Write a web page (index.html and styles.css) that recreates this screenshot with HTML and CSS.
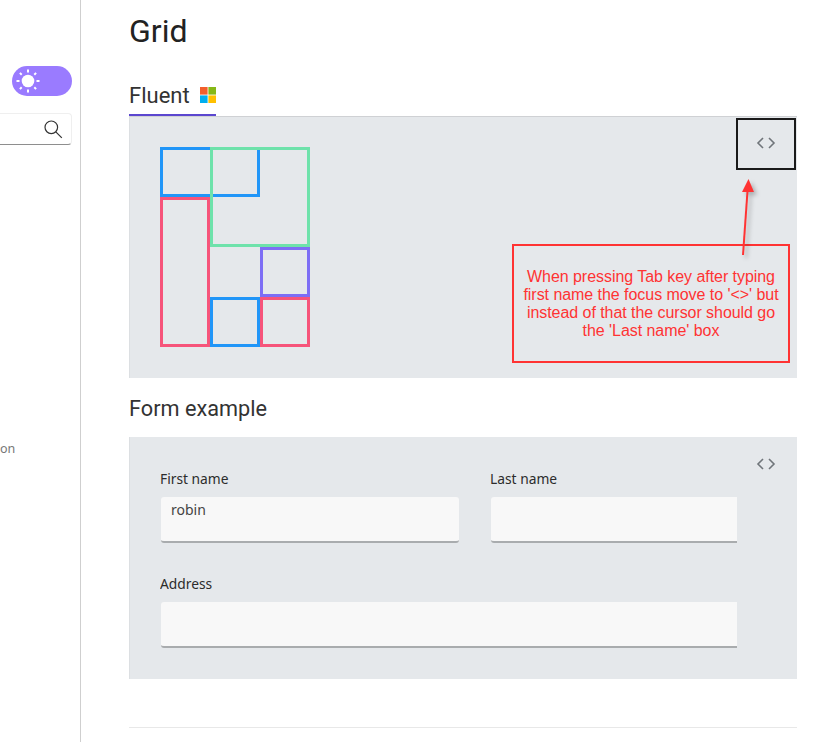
FILE: index.html
```html
<!DOCTYPE html>
<html lang="en">
<head>
<meta charset="utf-8">
<title>Grid</title>
<link rel="stylesheet" href="styles.css">
</head>
<body>
<div class="page">
  <aside class="sidebar">
    <div class="toggle">
      <svg class="sun" width="24" height="24" viewBox="0 0 24 24" aria-hidden="true">
        <circle cx="12" cy="12" r="6.3" fill="#fff"/>
        <g stroke="#fff" stroke-width="2" fill="none">
          <path d="M12 0.5v3M12 20.5v3M0.5 12h3M20.5 12h3"/>
          <path d="M3.9 3.9l1.8 1.8M18.3 18.3l1.8 1.8M3.9 20.1l1.8-1.8M18.3 5.7l1.8-1.8"/>
        </g>
      </svg>
    </div>
    <div class="search">
      <svg width="20" height="20" viewBox="0 0 20 20" aria-hidden="true">
        <circle cx="8.3" cy="8.3" r="6.3" fill="none" stroke="#333" stroke-width="1.2"/>
        <path d="M12.8 12.8l6 6" stroke="#333" stroke-width="1.2" fill="none"/>
      </svg>
    </div>
    <div class="nav-frag">on</div>
  </aside>
  <main class="main">
    <h1 class="title">Grid</h1>
    <div class="tabs">
      <div class="tab">
        <span>Fluent</span>
        <svg width="16" height="16" viewBox="0 0 16 16" aria-hidden="true">
          <rect width="7.6" height="7.6" fill="#f25f2c"/>
          <rect x="8.4" width="7.6" height="7.6" fill="#86b817"/>
          <rect y="8.4" width="7.6" height="7.6" fill="#00aeef"/>
          <rect x="8.4" y="8.4" width="7.6" height="7.6" fill="#ffc000"/>
        </svg>
      </div>
    </div>
    <section class="panel panel-grid">
      <div class="tiles">
        <div class="tile t-blue-a"></div>
        <div class="tile t-green"></div>
        <div class="tile t-pink-a"></div>
        <div class="tile t-purple"></div>
        <div class="tile t-blue-b"></div>
        <div class="tile t-pink-b"></div>
      </div>
      <button class="code focused" type="button" aria-label="Show code">
        <svg width="20" height="12" viewBox="0 0 20 12" aria-hidden="true"><path d="M7 1L2 6l5 5M13 1l5 5-5 5" fill="none" stroke="#70757a" stroke-width="1.6"/></svg>
      </button>
      <div class="note">When pressing Tab key after typing first name the focus move to '&lt;&gt;' but instead of that the cursor should go the 'Last name' box</div>
      <svg class="arrow" width="24" height="80" viewBox="0 0 24 80" aria-hidden="true">
        <path d="M6 76L10.5 12" stroke="#ff3333" stroke-width="2" fill="none"/>
        <path d="M11.5 0L5 13h12z" fill="#ff3333"/>
      </svg>
    </section>
    <h2 class="subtitle">Form example</h2>
    <section class="panel panel-form">
      <form class="form">
        <div class="field">
          <label class="label" for="first">First name</label>
          <div class="input" id="first">robin</div>
        </div>
        <div class="field">
          <label class="label" for="last">Last name</label>
          <div class="input" id="last"></div>
        </div>
        <div class="field field-wide">
          <label class="label" for="address">Address</label>
          <div class="input" id="address"></div>
        </div>
      </form>
      <button class="code" type="button" aria-label="Show code">
        <svg width="20" height="12" viewBox="0 0 20 12" aria-hidden="true"><path d="M7 1L2 6l5 5M13 1l5 5-5 5" fill="none" stroke="#70757a" stroke-width="1.6"/></svg>
      </button>
    </section>
    <hr class="rule">
  </main>
</div>
</body>
</html>
```

FILE: styles.css
```css
* { box-sizing: border-box; }
html, body { margin: 0; height: 100%; overflow: hidden; background: #fff; }
body { font-family: Roboto, "Liberation Sans", sans-serif; color: #212121; }

.page { display: flex; width: 836px; height: 742px; }

.sidebar {
  width: 81px;
  flex: none;
  border-right: 1px solid #cfcfcf;
  padding-top: 66px;
  display: flex;
  flex-direction: column;
  align-items: flex-end;
}
.toggle {
  width: 60px;
  height: 30px;
  margin-right: 8px;
  border-radius: 15px;
  background: #9a7bff;
  display: flex;
  align-items: center;
  padding-left: 4px;
}
.search {
  width: 72px;
  height: 32px;
  margin-top: 17px;
  margin-right: 8px;
  background: #fff;
  border: 1px solid #efefef;
  border-left: 0;
  border-bottom: 1px solid #8e8e8e;
  border-radius: 0 4px 4px 0;
  display: flex;
  align-items: center;
  justify-content: flex-end;
  padding-right: 8px;
}
.nav-frag {
  align-self: flex-start;
  margin-top: 295px;
  font-family: "Noto Sans", sans-serif;
  font-size: 12.5px;
  line-height: 18px;
  color: #777;
}

.main { width: 716px; flex: none; padding-left: 48px; }
.title {
  margin: 0;
  height: 60px;
  padding-top: 12px;
  font-size: 32px;
  line-height: 38px;
  font-weight: 400;
  color: #222;
}
.tabs { height: 56px; display: flex; align-items: flex-end; }
.tab {
  width: 87px;
  height: 38px;
  border-bottom: 2px solid #5b47cf;
  display: flex;
  gap: 10px;
  padding-left: 0;
  padding-top: 5px;
  font-size: 22px;
  line-height: 26px;
  color: #333;
}
.tab svg { margin-top: 4px; }

.panel {
  position: relative;
  width: 668px;
  background: #e5e8eb;
}
.panel-grid { height: 262px; border-top: 1px solid #cfd1d4; border-left: 1px solid #dcdfe2; padding: 30px 0 0 30px; margin-top: 0; }
.tiles {
  display: grid;
  grid-template-columns: repeat(3, 50px);
  grid-template-rows: repeat(4, 50px);
  width: 150px;
  height: 200px;
}
.tile { border: 3px solid; }
.t-blue-a { grid-column: 1 / 3; grid-row: 1; border-color: #2196f8; }
.t-green { grid-column: 2 / 4; grid-row: 1 / 3; border-color: #6ee2ab; }
.t-pink-a { grid-column: 1; grid-row: 2 / 5; border-color: #f6547a; }
.t-purple { grid-column: 3; grid-row: 3; border-color: #7d6ef5; }
.t-blue-b { grid-column: 2; grid-row: 4; border-color: #2196f8; }
.t-pink-b { grid-column: 3; grid-row: 4; border-color: #f6547a; }

.code {
  position: absolute;
  top: 0;
  right: 1px;
  width: 60px;
  height: 52px;
  padding: 0;
  border: 2px solid transparent;
  background: transparent;
  display: flex;
  align-items: center;
  justify-content: center;
}
.panel-grid .code { top: 1px; padding-bottom: 3px; }
.code.focused { border-color: #1a1a1a; }

.note {
  position: absolute;
  left: 382px;
  top: 127px;
  width: 278px;
  height: 119px;
  border: 2px solid #f33;
  padding: 22px 8px 0;
  font-family: "Liberation Sans", Arial, sans-serif;
  font-size: 16px;
  letter-spacing: -0.05px;
  line-height: 18px;
  text-align: center;
  color: #f33;
}
.arrow {
  position: absolute;
  left: 607px;
  top: 62px;
  filter: drop-shadow(3px 3px 2px rgba(0, 0, 0, .25));
}

.subtitle {
  margin: 0;
  height: 59px;
  padding-top: 18px;
  font-size: 21.7px;
  line-height: 26px;
  font-weight: 400;
  color: #333;
}

.panel-form { height: 242px; padding: 32px 0 0 30px; border-left: 1px solid #dcdfe2; }
.panel-form .code { top: 1px; }
.form {
  display: grid;
  grid-template-columns: 300px 300px;
  column-gap: 30px;
  row-gap: 31px;
  width: 577px;
  overflow: hidden;
}
.field-wide { grid-column: 1 / 3; }
.label {
  display: block;
  height: 28px;
  font-family: "Noto Sans", sans-serif;
  font-size: 13.8px;
  line-height: 19px;
  color: #2c2c2c;
}
.input {
  height: 46px;
  margin: 0 1px;
  padding: 3px 10px 0;
  background: #f8f8f8;
  border-radius: 3px;
  border-bottom: 2px solid #a9acae;
  font-family: "Noto Sans", sans-serif;
  font-size: 14px;
  line-height: 19px;
  color: #444;
}

.rule { margin: 48px 0 0; border: 0; border-top: 1px solid #e8e8e8; width: 668px; }
```
